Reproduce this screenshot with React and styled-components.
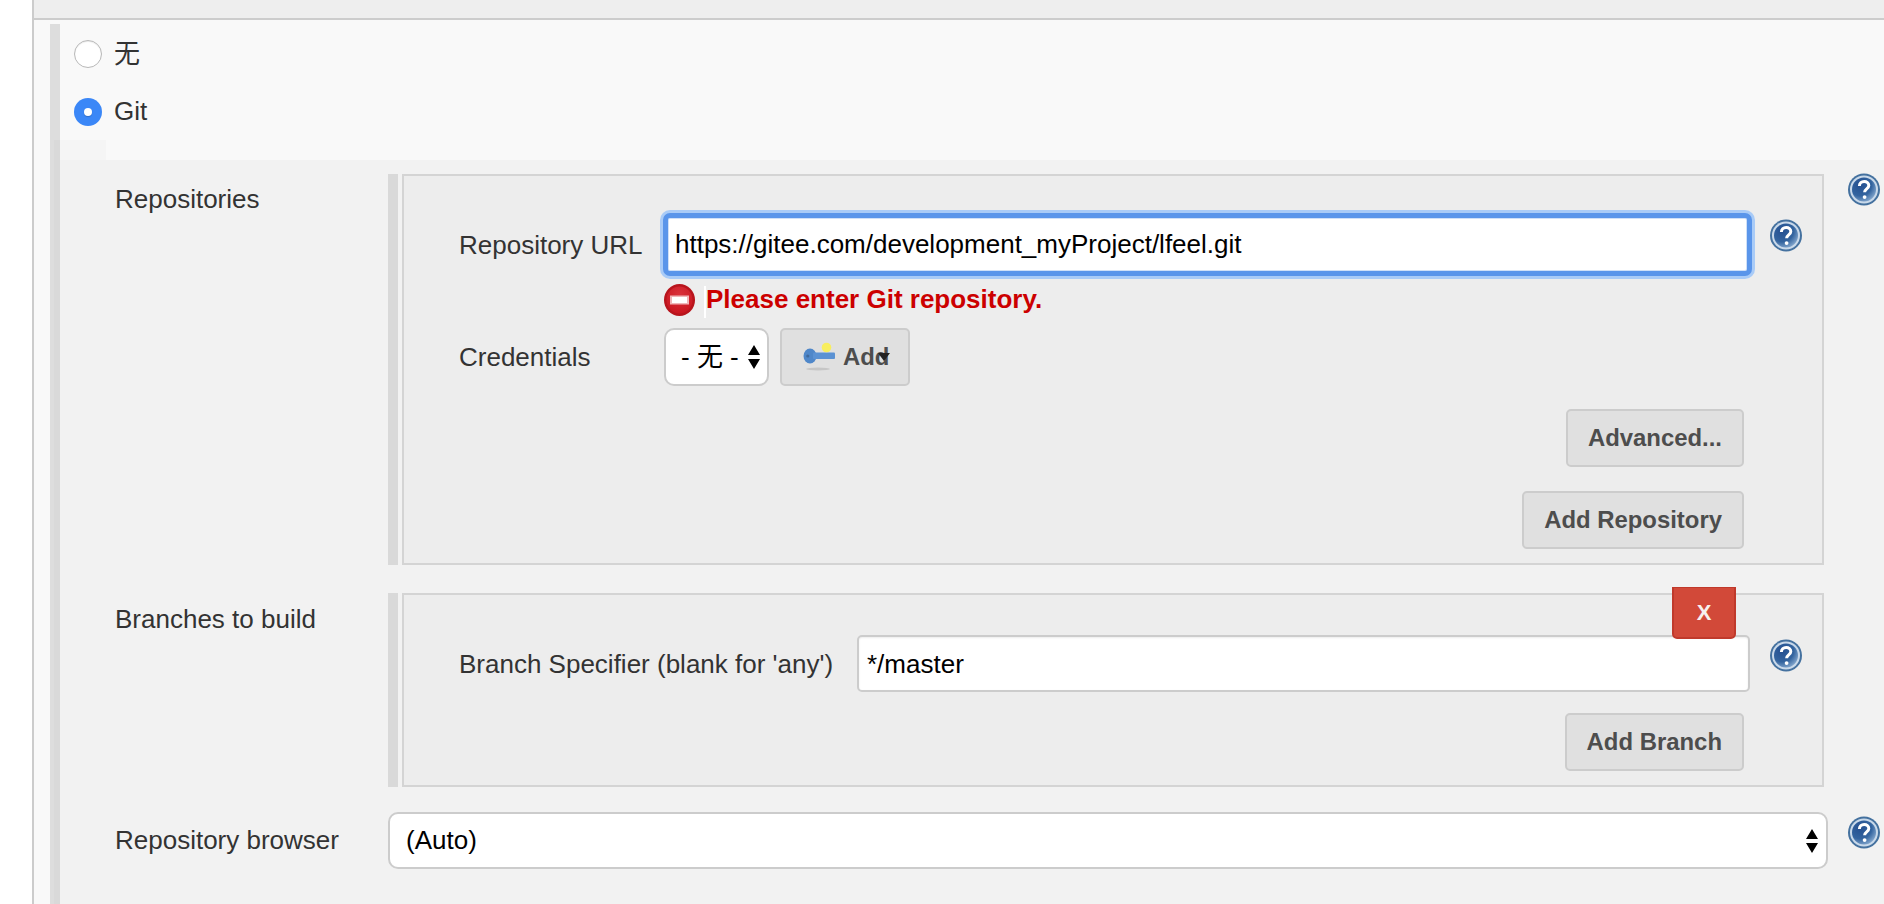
import React from "react";
import styled, { createGlobalStyle } from "styled-components";

const GlobalStyle = createGlobalStyle`
  html, body {
    margin: 0;
    padding: 0;
    background: #fff;
  }
  body {
    font-family: "Liberation Sans", Arial, "Noto Sans CJK SC", sans-serif;
    color: #333;
  }
  * {
    box-sizing: border-box;
  }
`;

const Page = styled.div`
  height: 904px;
  overflow: hidden;
  padding-left: 32px;
`;

const Frame = styled.div`
  height: 100%;
  border-left: 2px solid #ccc;
  background: #f9f9f9;
`;

const TopBand = styled.div`
  height: 20px;
  background: #eee;
  border-bottom: 2px solid #ccc;
`;

const Dropdown = styled.div`
  margin: 4px 0 0 16px;
  border-left: 4px solid #ddd;
  height: 880px;
`;

const RadioList = styled.div`
  display: flex;
  flex-direction: column;
  gap: 30px;
  height: 116px;
  padding: 16px 0 0 14px;
  border-left: 6px solid #ddd;
`;

const RadioRow = styled.label`
  display: flex;
  align-items: center;
  gap: 12px;
  height: 28px;
  font-size: 26px;
`;

const RadioText = styled.span`
  padding-bottom: ${(p) => p.$lift}px;
`;

const RadioDot = styled.span`
  width: 28px;
  height: 28px;
  border-radius: 50%;
  flex: none;
  display: flex;
  align-items: center;
  justify-content: center;
  background: ${(p) => (p.$checked ? "#3b87f7" : "#fff")};
  border: ${(p) => (p.$checked ? "none" : "1.5px solid #b8b8b8")};
  box-shadow: ${(p) => (p.$checked ? "none" : "inset 0 1px 1px rgba(0,0,0,.08)")};
  &::after {
    content: "";
    display: ${(p) => (p.$checked ? "block" : "none")};
    width: 8px;
    height: 8px;
    border-radius: 50%;
    background: #fff;
    box-shadow: 0 1px 1px rgba(0, 0, 0, 0.2);
  }
`;

const Nested = styled.div`
  border-left: 6px solid #d9d9d9;
  height: 764px;
  display: flex;
  flex-direction: column;
`;

const Notch = styled.div`
  width: 46px;
  height: 20px;
  flex: none;
  background: #f5f5f5;
`;

const Section = styled.div`
  flex: 1;
  background: #f2f2f2;
  padding-top: 14px;
`;

const Row = styled.div`
  display: flex;
  align-items: flex-start;
  margin-bottom: ${(p) => p.$after || 0}px;
`;

const RowLabel = styled.div`
  width: 328px;
  flex: none;
  padding-left: 55px;
  font-size: 26px;
  line-height: 30px;
  margin-top: ${(p) => p.$top}px;
`;

const Control = styled.div`
  width: ${(p) => p.$w}px;
  flex: none;
  display: flex;
  align-items: stretch;
`;

const Strip = styled.div`
  width: 10px;
  flex: none;
  margin-right: 4px;
  background: #d9d9d9;
`;

const Box = styled.div`
  position: relative;
  flex: 1;
  background: #ededed;
  border: 2px solid #d4d4d4;
  padding: ${(p) => p.$top}px 0 14px 55px;
`;

const Field = styled.div`
  display: flex;
  align-items: flex-start;
  height: 57px;
  font-size: 26px;
`;

const FieldLabel = styled.div`
  width: ${(p) => p.$w}px;
  flex: none;
  line-height: ${(p) => p.$lh || 57}px;
  white-space: nowrap;
`;

const TextInput = styled.div`
  width: ${(p) => p.$w}px;
  height: 57px;
  flex: none;
  background: #fff;
  color: #000;
  padding-left: ${(p) => p.$pad}px;
  line-height: ${(p) => p.$lh || 53}px;
  border: 2px solid #ccc;
  border-radius: 5px;
  box-shadow: inset 0 1px 2px rgba(0, 0, 0, 0.08);
  white-space: nowrap;
`;

// focus ring sticks out of the normal input box, the margins keep the row in place
const FocusedInput = styled(TextInput)`
  width: 1089px;
  height: 63px;
  margin: -5px -2px -1px -1px;
  border: 5px solid #5a95ea;
  border-radius: 7px;
  box-shadow: 0 0 0 3px #a9cbf7, inset 0 0 0 1px #cfe0f8;
`;

const HelpButton = styled.svg`
  width: 32px;
  height: 33px;
  flex: none;
  display: block;
  margin-left: ${(p) => p.$left}px;
  margin-top: ${(p) => p.$top}px;
  filter: blur(0.5px);
`;

const ErrorRow = styled.div`
  display: flex;
  align-items: flex-start;
  height: 32px;
  margin: 9px 0 12px 205px;
  color: #cc0000;
  font-size: 26px;
  font-weight: 700;
`;

const ErrorText = styled.span`
  height: 32px;
  margin: 2px 0 0 9px;
  border-left: 2px solid #fff;
  line-height: 26px;
  white-space: nowrap;
`;

const SelectBox = styled.div`
  position: relative;
  height: ${(p) => p.$h || 58}px;
  width: ${(p) => p.$w || 105}px;
  flex: none;
  background: #fff;
  color: #000;
  border: 2px solid #ccc;
  border-radius: 10px;
  font-size: 26px;
  line-height: ${(p) => (p.$h || 58) - 4}px;
  padding-left: ${(p) => p.$pad || 15}px;
  white-space: nowrap;
`;

const UpDown = styled.svg`
  position: absolute;
  top: 50%;
  right: ${(p) => p.$right}px;
  width: 12px;
  height: 24px;
  transform: translateY(-50%);
`;

const Button = styled.div`
  height: 58px;
  flex: none;
  display: flex;
  align-items: center;
  padding: 0 20px;
  background: #e0e0e0;
  border: 2px solid #ccc;
  border-radius: 5px;
  color: #4d4d4d;
  font-size: 23.9px;
  font-weight: 700;
  white-space: nowrap;
`;

const AddButton = styled(Button)`
  position: relative;
  width: 130px;
  margin-left: 11px;
  padding: 0 0 0 21px;
`;

const KeyIcon = styled.svg`
  width: 32px;
  height: 30px;
  flex: none;
  margin: 0 8px 0 0;
  filter: blur(0.6px);
`;

const Caret = styled.span`
  position: absolute;
  left: 96px;
  top: 23px;
  width: 0;
  height: 0;
  border-left: 6px solid transparent;
  border-right: 6px solid transparent;
  border-top: 8px solid #222;
`;

const CredentialsRow = styled.div`
  display: flex;
  align-items: flex-start;
  font-size: 26px;
`;

const ButtonRow = styled.div`
  display: flex;
  justify-content: flex-end;
  padding-right: 78px;
  margin-top: ${(p) => p.$top}px;
`;

const DeleteButton = styled.div`
  position: absolute;
  top: -8px;
  right: 86px;
  width: 64px;
  height: 52px;
  display: flex;
  align-items: center;
  justify-content: center;
  background: #d24939;
  border: 2px solid #c0392b;
  border-top-width: 1px;
  border-radius: 0 0 5px 5px;
  color: #f7f0ee;
  font-size: 22px;
  font-weight: 700;
`;

function Help({ id, left, top }) {
  return (
    <HelpButton $left={left} $top={top} viewBox="0 0 32 32">
      <defs>
        <radialGradient id={id} cx="0.35" cy="0.3" r="0.85">
          <stop offset="0" stopColor="#244f90" />
          <stop offset="0.55" stopColor="#33649f" />
          <stop offset="1" stopColor="#9dbcdc" />
        </radialGradient>
      </defs>
      <circle cx="16" cy="16" r="16" fill="#44719f" />
      <circle cx="16" cy="16" r="14" fill="#c9d9ea" />
      <circle cx="16" cy="16" r="12" fill={`url(#${id})`} />
      <path
        d="M11.4 12.6c0-3 2.2-4.6 4.8-4.6s4.6 1.6 4.6 4c0 3.4-4.2 3.4-4.2 6.8"
        fill="none"
        stroke="#fff"
        strokeWidth="3"
      />
      <circle cx="16.6" cy="23.6" r="1.9" fill="#fff" />
    </HelpButton>
  );
}

function Arrows({ right }) {
  return (
    <UpDown $right={right} viewBox="0 0 12 24">
      <path d="M6 0l6 10H0zM0 14h12L6 24z" fill="#000" />
    </UpDown>
  );
}

function ErrorIcon() {
  return (
    <svg width="31" height="32" viewBox="0 0 31 32">
      <defs>
        <radialGradient id="errFill" cx="0.5" cy="0.3" r="0.8">
          <stop offset="0" stopColor="#d9303a" />
          <stop offset="1" stopColor="#c8121c" />
        </radialGradient>
      </defs>
      <ellipse cx="15.5" cy="16" rx="15.5" ry="16" fill="#b8141c" />
      <ellipse cx="15.5" cy="16" rx="13" ry="13.5" fill="url(#errFill)" />
      <rect x="6" y="11.5" width="19" height="9" fill="#f0b5b8" />
      <rect x="8" y="13" width="15" height="6" fill="#fff" />
    </svg>
  );
}

function Key() {
  return (
    <KeyIcon viewBox="0 0 32 30">
      <ellipse cx="15" cy="27" rx="12" ry="1.5" fill="#c6c6c6" />
      <ellipse cx="7" cy="14" rx="6.5" ry="7.5" fill="#4f87c9" />
      <rect x="10" y="10.5" width="22" height="6.5" rx="1" fill="#5b92d3" />
      <circle cx="4.8" cy="14" r="1.6" fill="#3f6a9c" />
      <circle cx="23.5" cy="5.5" r="4.8" fill="#f8ee5e" />
    </KeyIcon>
  );
}

export default function App() {
  return (
    <>
      <GlobalStyle />
      <Page>
        <Frame>
          <TopBand />
          <Dropdown>
            <RadioList>
              <RadioRow>
                <RadioDot />
                <RadioText $lift={5}>无</RadioText>
              </RadioRow>
              <RadioRow>
                <RadioDot $checked />
                <RadioText $lift={2}>Git</RadioText>
              </RadioRow>
            </RadioList>
            <Nested>
              <Notch />
              <Section>
                <Row $after={28}>
                  <RowLabel $top={10}>Repositories</RowLabel>
                  <Control $w={1436}>
                    <Strip />
                    <Box $top={42}>
                      <Field>
                        <FieldLabel $w={205} $lh={55}>
                          Repository URL
                        </FieldLabel>
                        <FocusedInput $pad={7}>
                          https://gitee.com/development_myProject/lfeel.git
                        </FocusedInput>
                        <Help id="helpUrl" left={20} top={1} />
                      </Field>
                      <ErrorRow>
                        <ErrorIcon />
                        <ErrorText>Please enter Git repository.</ErrorText>
                      </ErrorRow>
                      <CredentialsRow>
                        <FieldLabel $w={205} $lh={58}>
                          Credentials
                        </FieldLabel>
                        <SelectBox>
                          - 无 -
                          <Arrows right={7} />
                        </SelectBox>
                        <AddButton>
                          <Key />
                          Add
                          <Caret />
                        </AddButton>
                      </CredentialsRow>
                      <ButtonRow $top={23}>
                        <Button>Advanced...</Button>
                      </ButtonRow>
                      <ButtonRow $top={24}>
                        <Button>Add Repository</Button>
                      </ButtonRow>
                    </Box>
                  </Control>
                  <Help id="helpRepos" left={24} top={-1} />
                </Row>
                <Row $after={25}>
                  <RowLabel $top={11}>Branches to build</RowLabel>
                  <Control $w={1436}>
                    <Strip />
                    <Box $top={40}>
                      <DeleteButton>X</DeleteButton>
                      <Field>
                        <FieldLabel $w={398} $lh={58}>
                          Branch Specifier (blank for 'any')
                        </FieldLabel>
                        <TextInput $w={893} $pad={8} $lh={54}>
                          */master
                        </TextInput>
                        <Help id="helpBranch" left={20} top={4} />
                      </Field>
                      <ButtonRow $top={21}>
                        <Button>Add Branch</Button>
                      </ButtonRow>
                    </Box>
                  </Control>
                </Row>
                <Row>
                  <RowLabel $top={13}>Repository browser</RowLabel>
                  <Control $w={1440}>
                    <SelectBox $w={1440} $h={57} $pad={16}>
                      (Auto)
                      <Arrows right={8} />
                    </SelectBox>
                  </Control>
                  <Help id="helpBrowser" left={20} top={4} />
                </Row>
              </Section>
            </Nested>
          </Dropdown>
        </Frame>
      </Page>
    </>
  );
}
